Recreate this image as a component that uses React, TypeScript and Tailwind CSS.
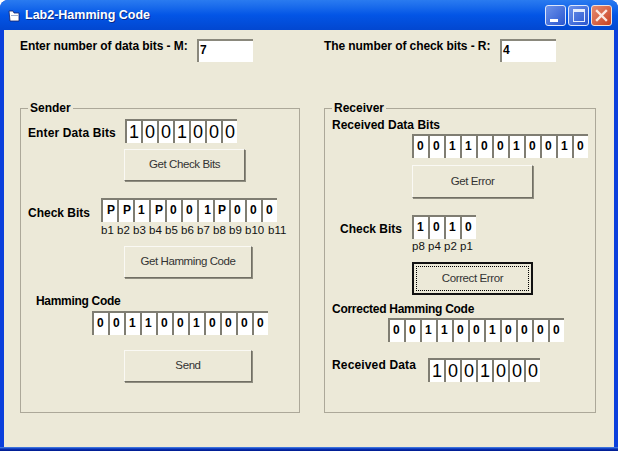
import React from 'react';

type BitProps = { v: string; big?: boolean; pos?: 'l' | 'c' | 'r' };

const Bit: React.FC<BitProps> = ({ v, big, pos = 'l' }) => {
  const align = pos === 'r' ? 'justify-end pr-[2px]' : pos === 'c' ? 'justify-center pl-[3px]' : big ? 'justify-start pl-[2px]' : 'justify-start pl-[3px]';
  return (
    <div
      className={`flex w-[16px] h-[24px] shrink-0 bg-white border-t-2 border-l-2 border-t-[#7f7d72] border-l-[#7f7d72] ${align} ${
        big ? 'items-center text-[18px] font-normal' : 'items-start text-[12px] font-bold pt-[1px]'
      }`}
    >
      {v}
    </div>
  );
};

const Bits: React.FC<{ bits: string; big?: boolean; right?: number[]; center?: number[]; className?: string }> = ({
  bits,
  big,
  right = [],
  center = [],
  className = '',
}) => (
  <div className={`flex w-fit text-black ${className}`}>
    {bits.split('').map((b, i) => (
      <Bit key={i} v={b} big={big} pos={right.includes(i) ? 'r' : center.includes(i) ? 'c' : 'l'} />
    ))}
  </div>
);

const Btn: React.FC<{ label: string; w: string; h?: string; focus?: boolean; className?: string }> = ({
  label,
  w,
  h = 'h-[32px]',
  focus,
  className = '',
}) =>
  focus ? (
    <div className={`${w} ${h} border-2 border-[#111] p-[2px] bg-[#ece9d8] ${className}`}>
      <div className="flex h-full items-center justify-center border border-dotted border-black text-[11.5px] tracking-[-0.4px] text-[#333]">
        {label}
      </div>
    </div>
  ) : (
    <div
      className={`flex ${w} ${h} items-center justify-center border border-t-[#faf9f4] border-l-[#faf9f4] border-r-[#716f64] border-b-[#716f64] shadow-[1px_1px_0_#8f8d80] bg-[#ece9d8] text-[11.5px] tracking-[-0.4px] text-[#333] ${className}`}
    >
      {label}
    </div>
  );

const Label: React.FC<{ children: React.ReactNode; className?: string }> = ({ children, className = 'tracking-[0.05px]' }) => (
  <div className={`text-[12px] leading-[14px] font-bold text-black whitespace-nowrap ${className}`}>
    {children}
  </div>
);

const Group: React.FC<{ title: string; w: string; children: React.ReactNode }> = ({ title, w, children }) => (
  <fieldset className={`${w} h-[312px] border border-[#aca899]`}>
    <legend className="ml-[7px] px-[2px] text-[12px] leading-[14px] font-bold text-black">{title}</legend>
    {children}
  </fieldset>
);

export default function App() {
  return (
    <div className="flex flex-col w-[618px] h-[451px] rounded-t-[8px] overflow-hidden bg-[#0a3fdc] font-['Liberation_Sans',sans-serif]">
      {/* Title bar */}
      <div className="flex items-center h-[30px] pl-[8px] pr-[6px] bg-gradient-to-b from-[#2a7bf0] via-[#0355e6] to-[#0247d0]">
        <svg width="12" height="12" viewBox="0 0 12 12" className="shrink-0 mt-[1px]">
          <path d="M1 1h4l1 2h5v8H2z" fill="#fff" stroke="#10206a" strokeWidth="0.8" />
          <path d="M3 5h7v1H3z" fill="#9fb0d0" />
        </svg>
        <div className="ml-[5px] mt-[1px] text-[12.5px] font-bold text-white [text-shadow:1px_1px_0_#0a2a8a]">Lab2-Hamming Code</div>
        <div className="ml-auto flex gap-[2px]">
          <div className="flex items-end w-[21px] h-[21px] pb-[3px] pl-[4px] rounded-[3px] border border-[#dce6fb] bg-gradient-to-br from-[#6d92ea] to-[#2a55cf]">
            <div className="w-[8px] h-[3px] bg-white" />
          </div>
          <div className="flex items-center justify-center w-[21px] h-[21px] rounded-[3px] border border-[#dce6fb] bg-gradient-to-br from-[#6d92ea] to-[#2a55cf]">
            <div className="w-[12px] h-[13px] border border-t-[3px] border-[#e6edfc]" />
          </div>
          <div className="flex items-center justify-center w-[21px] h-[21px] rounded-[3px] border border-[#f0e0da] bg-gradient-to-br from-[#e58a70] to-[#c8401f]">
            <svg width="15" height="15" viewBox="0 0 15 15">
              <path d="M3 3l9 9M12 3l-9 9" stroke="#fbe9e2" strokeWidth="2.4" strokeLinecap="square" />
            </svg>
          </div>
        </div>
      </div>

      {/* Client area */}
      <div className="mx-[4px] flex-1 bg-[#ece9d8]">
        {/* Top inputs */}
        <div className="flex h-[71px] pt-[9px] pl-[16px]">
          <div className="flex w-[304px]">
            <Label className="w-[177px] tracking-[-0.08px]">Enter number of data bits - M:</Label>
            <div className="w-[56px] h-[23px] bg-white border-t-2 border-l-2 border-t-[#8a887c] border-l-[#8a887c] pl-[1px] text-[12px] font-bold text-black">7</div>
          </div>
          <div className="flex">
            <Label className="w-[176px] tracking-[-0.08px]">The number of check bits - R:</Label>
            <div className="w-[56px] h-[23px] bg-white border-t-2 border-l-2 border-t-[#8a887c] border-l-[#8a887c] pl-[1px] text-[12px] font-bold text-black">4</div>
          </div>
        </div>

        <div className="flex pl-[16px] gap-[24px]">
          {/* Sender */}
          <Group title="Sender" w="w-[280px]">
            <div className="flex mt-[4px] pl-[7px]">
              <Label className="w-[97px] mt-[7px] tracking-[0.12px]">Enter Data Bits</Label>
              <Bits bits="1001000" big right={[0]} />
            </div>
            <Btn label="Get Check Bits" w="w-[121px]" className="ml-[103px] mt-[6px]" />
            <div className="flex mt-[17px] pl-[7px]">
              <Label className="w-[73px] mt-[8px]">Check Bits</Label>
              <Bits bits="PP1P001P000" right={[0, 1, 3, 6]} />
            </div>
            <div className="flex mt-[1px] ml-[80px] text-[11.5px] leading-[14px] text-[#111]">
              {['b1', 'b2', 'b3', 'b4', 'b5', 'b6', 'b7', 'b8', 'b9'].map((b) => (
                <div key={b} className="w-[16px]">{b}</div>
              ))}
              <div className="w-[23px]">b10</div>
              <div>b11</div>
            </div>
            <Btn label="Get Hamming Code" w="w-[128px]" className="ml-[103px] mt-[9px]" />
            <Label className="ml-[15px] mt-[16px] tracking-[-0.3px]">Hamming Code</Label>
            <Bits bits="00110010000" className="ml-[71px] mt-[3px]" />
            <Btn label="Send" w="w-[128px]" className="ml-[103px] mt-[15px]" />
          </Group>

          {/* Receiver */}
          <Group title="Receiver" w="w-[272px]">
            <Label className="ml-[7px] mt-[3px]">Received Data Bits</Label>
            <Bits bits="00110010010" className="ml-[87px] mt-[2px]" />
            <Btn label="Get Error" w="w-[121px]" h="h-[33px]" className="ml-[87px] mt-[7px]" />
            <div className="flex mt-[17px] pl-[15px]">
              <Label className="w-[72px] mt-[7px]">Check Bits</Label>
              <Bits bits="1010" />
            </div>
            <div className="flex ml-[87px] text-[11.5px] leading-[14px] text-[#111]">
              {['p8', 'p4', 'p2', 'p1'].map((p) => (
                <div key={p} className="w-[16px]">{p}</div>
              ))}
            </div>
            <Btn label="Correct Error" w="w-[121px]" h="h-[33px]" focus className="ml-[87px] mt-[9px]" />
            <Label className="ml-[7px] mt-[7px] tracking-[-0.27px]">Corrected Hamming Code</Label>
            <Bits bits="00110010000" className="ml-[63px] mt-[2px]" />
            <div className="flex mt-[16px] pl-[7px]">
              <Label className="w-[96px] tracking-[0.15px]">Received Data</Label>
              <Bits bits="1001000" big right={[0]} />
            </div>
          </Group>
        </div>
      </div>
      {/* Bottom frame edge */}
      <div className="h-[4px] bg-gradient-to-b from-[#4f86e8] via-[#0a2fb8] to-[#001a8a]" />
    </div>
  );
}
